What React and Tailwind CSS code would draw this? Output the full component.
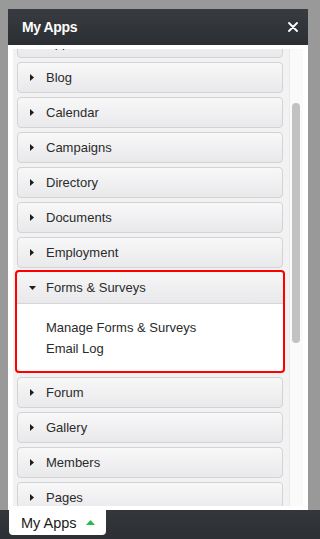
import React from "react";

const font = { fontFamily: '"Liberation Sans", Arial, Helvetica, sans-serif' };

function Right() {
  return (
    <svg width="4" height="7" viewBox="0 0 4 7" className="shrink-0">
      <polygon points="0,0 4,3.5 0,7" fill="#1e1e1e" />
    </svg>
  );
}

function Down() {
  return (
    <svg width="7" height="4" viewBox="0 0 7 4" className="shrink-0">
      <polygon points="0,0 7,0 3.5,4" fill="#1e1e1e" />
    </svg>
  );
}

function Item({ label, mb = "mb-[4px]" }) {
  return (
    <div
      className={`h-[31px] ${mb} border border-[#d3d3d6] rounded-[4px] bg-gradient-to-b from-[#f8f8f9] to-[#e9e9eb] flex items-center pl-[12px] text-[13px] text-[#2b2b2b]`}
    >
      <Right />
      <span className="ml-[12px]">{label}</span>
    </div>
  );
}

export default function App() {
  const before = ["Apps", "Blog", "Calendar", "Campaigns", "Directory", "Documents", "Employment"];
  const after = ["Forum", "Gallery", "Members", "Pages"];
  return (
    <div className="w-[320px] h-[539px] bg-[#999999] relative overflow-hidden" style={font}>
      <div className="ml-[8px] pt-[9px] w-[300px]">
        <div className="h-[501px] bg-white flex flex-col">
          <div className="h-[36px] shrink-0 bg-gradient-to-b from-[#383c41] to-[#2b2f33] flex items-center justify-between pl-[14px] pr-[10px]">
            <span className="text-white font-bold text-[14px] tracking-[-0.4px]">My Apps</span>
            <svg width="10" height="10" viewBox="0 0 10 10">
              <path d="M1 1 L9 9 M9 1 L1 9" stroke="#ffffff" strokeWidth="1.8" strokeLinecap="round" />
            </svg>
          </div>
          <div className="flex-1 min-h-0 pl-[5px] pr-[5px] pt-[4px] pb-[4px] flex">
            <div className="flex-1 min-w-0 bg-[#f2f2f3] flex overflow-hidden">
              <div className="flex-1 min-w-0 pl-[4px] pr-[6px] mt-[-22px]">
                {before.map((l) => (
                  <Item key={l} label={l} />
                ))}
                <div className="mt-[1px] mb-[6px] outline-2 outline-[#ff0000] rounded-[2px] bg-white">
                  <div className="h-[32px] bg-gradient-to-b from-[#f6f6f7] to-[#e9e9eb] border-b border-[#d6d6d8] flex items-center pl-[12px] text-[13px] text-[#2b2b2b]">
                    <Down />
                    <span className="ml-[10px]">Forms &amp; Surveys</span>
                  </div>
                  <div className="pt-[13px] pb-[12px] pl-[29px] text-[13px] leading-[21px] text-[#2b2b2b]">
                    <div>Manage Forms &amp; Surveys</div>
                    <div>Email Log</div>
                  </div>
                </div>
                {after.map((l) => (
                  <Item key={l} label={l} />
                ))}
              </div>
              <div className="w-[14px] shrink-0 bg-[#fafafa] border-l border-[#ebebeb] pt-[54px] pl-[2px] pr-[3px]">
                <div className="h-[240px] w-[8px] rounded-full bg-[#c2c2c2]" />
              </div>
            </div>
          </div>
        </div>
      </div>
      <div className="absolute left-0 right-0 bottom-0 h-[29px] bg-gradient-to-b from-[#33373c] to-[#2c3034]">
        <div className="ml-[9px] w-[97px] h-[25px] bg-white rounded-b-[4px] flex items-center pl-[12px]">
          <span className="text-[14.5px] leading-[18px] text-[#1a1a1a]">My Apps</span>
          <svg width="9" height="5" viewBox="0 0 9 5" className="ml-[9px]">
            <polygon points="0,5 9,5 4.5,0" fill="#2db84b" />
          </svg>
        </div>
      </div>
    </div>
  );
}
